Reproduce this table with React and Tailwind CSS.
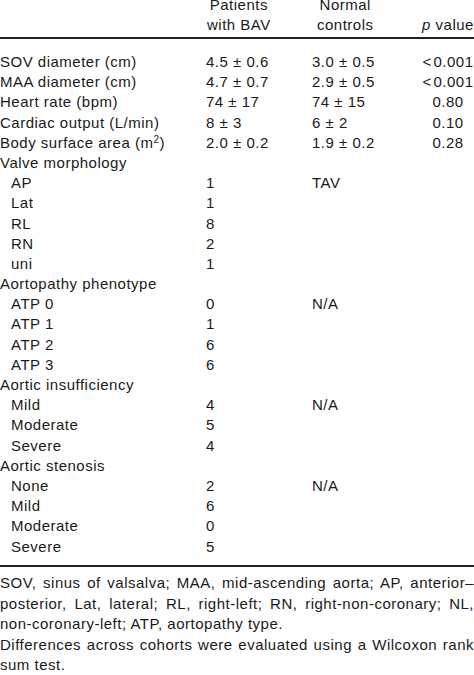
const rows = [
  { label: "SOV diameter (cm)", bav: "4.5 ± 0.6", ctrl: "3.0 ± 0.5", p: "<\u200A0.001" },
  { label: "MAA diameter (cm)", bav: "4.7 ± 0.7", ctrl: "2.9 ± 0.5", p: "<\u200A0.001" },
  { label: "Heart rate (bpm)", bav: "74 ± 17", ctrl: "74 ± 15", p: "0.80" },
  { label: "Cardiac output (L/min)", bav: "8 ± 3", ctrl: "6 ± 2", p: "0.10" },
  {
    label: (
      <>
        Body surface area (m<sup className="text-[10px]">2</sup>)
      </>
    ),
    bav: "2.0 ± 0.2",
    ctrl: "1.9 ± 0.2",
    p: "0.28",
  },
  { label: "Valve morphology" },
  { label: "AP", sub: true, bav: "1", ctrl: "TAV" },
  { label: "Lat", sub: true, bav: "1" },
  { label: "RL", sub: true, bav: "8" },
  { label: "RN", sub: true, bav: "2" },
  { label: "uni", sub: true, bav: "1" },
  { label: "Aortopathy phenotype" },
  { label: "ATP 0", sub: true, bav: "0", ctrl: "N/A" },
  { label: "ATP 1", sub: true, bav: "1" },
  { label: "ATP 2", sub: true, bav: "6" },
  { label: "ATP 3", sub: true, bav: "6" },
  { label: "Aortic insufficiency" },
  { label: "Mild", sub: true, bav: "4", ctrl: "N/A" },
  { label: "Moderate", sub: true, bav: "5" },
  { label: "Severe", sub: true, bav: "4" },
  { label: "Aortic stenosis" },
  { label: "None", sub: true, bav: "2", ctrl: "N/A" },
  { label: "Mild", sub: true, bav: "6" },
  { label: "Moderate", sub: true, bav: "0" },
  { label: "Severe", sub: true, bav: "5" },
]

export default function App() {
  return (
    <div className="w-[474px] h-[675px] overflow-hidden bg-white text-[#1a1a1a] font-['Liberation_Sans',Arial,sans-serif] text-[15px] leading-[20.2px] tracking-[0.5px]">
      {/* Header */}
      <div className="mt-[-5px] grid grid-cols-[206px_106px_110px_52px] items-end border-b-2 border-[#222] pb-[2px]">
        <div></div>
        <div className="w-fit pl-[1px] text-center">
          Patients
          <br />
          with BAV
        </div>
        <div className="w-fit pl-[5px] text-center">
          Normal
          <br />
          controls
        </div>
        <div className="text-center whitespace-nowrap">
          <i>p</i> value
        </div>
      </div>

      {/* Body */}
      <div className="pt-[12.6px] pb-[8px] border-b-2 border-[#222]">
        {rows.map((r, i) => (
          <div key={i} className="grid grid-cols-[206px_106px_110px_52px] h-[20.2px] whitespace-nowrap">
            <div className={r.sub ? "pl-[11px]" : ""}>{r.label}</div>
            <div>{r.bav}</div>
            <div>{r.ctrl}</div>
            <div className="text-center">{r.p}</div>
          </div>
        ))}
      </div>

      {/* Footnote */}
      <div className="pt-[6.5px] leading-[20.5px]">
        <p className="text-justify">
          SOV, sinus of valsalva; MAA, mid-ascending aorta; AP, anterior–posterior, Lat, lateral; RL, right-left; RN,
          right-non-coronary; NL, non-coronary-left; ATP, aortopathy type.
        </p>
        <p className="text-justify">
          Differences across cohorts were evaluated using a Wilcoxon rank sum test.
        </p>
      </div>
    </div>
  )
}
